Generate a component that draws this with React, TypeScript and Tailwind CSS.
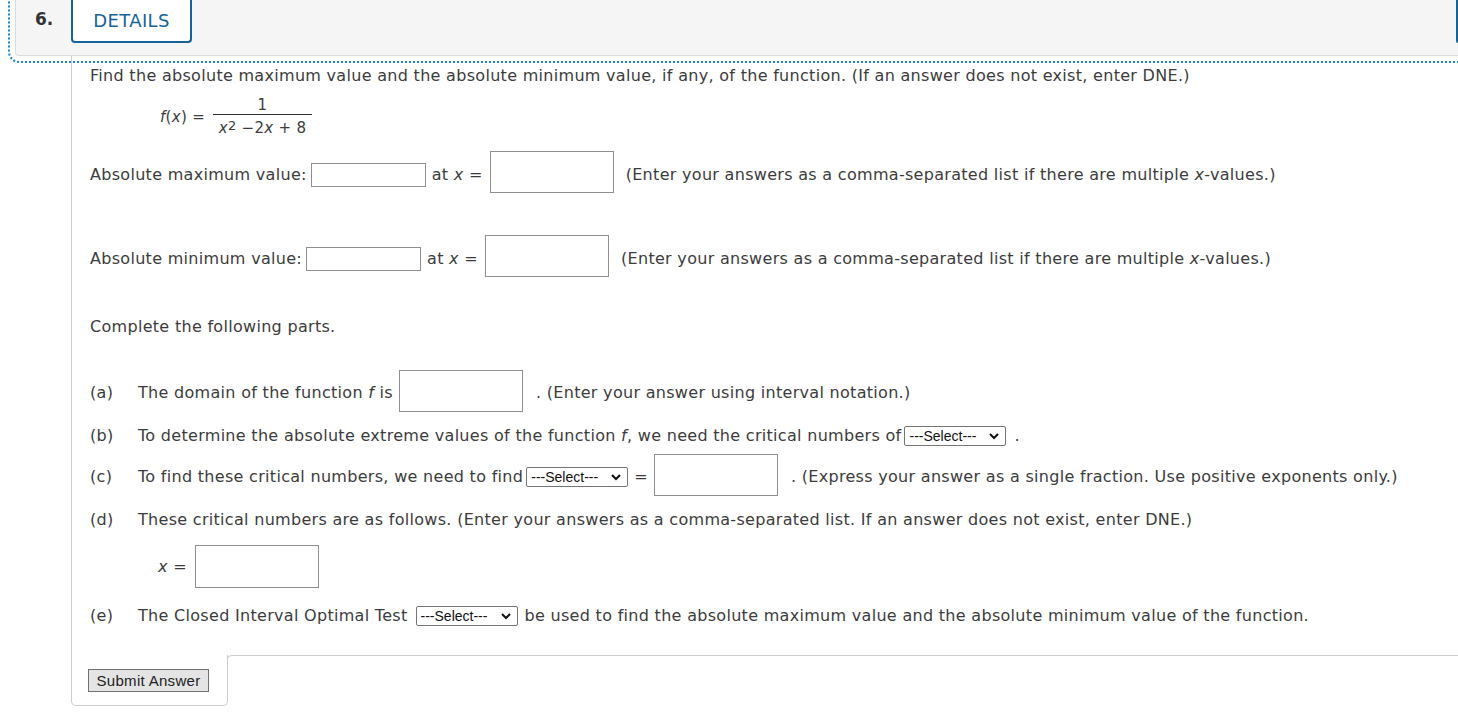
import React from 'react'

const font = { fontFamily: '"DejaVu Sans", Verdana, sans-serif' }

const SmallInput = () => <div className="h-[24px] w-[115px] border border-[#8f8f8f] bg-white" />

const TallInput = ({ className = '' }: { className?: string }) => (
  <div className={`h-[42px] w-[124px] border border-[#8f8f8f] bg-white ${className}`} />
)

const SelectBox = () => (
  <div className="flex h-[20px] w-[102px] items-center justify-between rounded-[2px] border border-[#767676] bg-white pl-[4px] pr-[6px] tracking-normal">
    <span className="text-[14px] leading-[18px] text-[#111]" style={{ fontFamily: '"Liberation Sans", Arial, sans-serif' }}>
      ---Select---
    </span>
    <svg width="10" height="8" viewBox="0 0 10 8">
      <path d="M1 2 L5 6 L9 2" fill="none" stroke="#111" strokeWidth="2" />
    </svg>
  </div>
)

const X = () => <i>x</i>

const Part = ({ label, children }: { label: string; children: React.ReactNode }) => (
  <div className="flex h-full items-center">
    <span className="w-[48px] shrink-0">{label}</span>
    {children}
  </div>
)

export default function App() {
  return (
    <div className="min-h-[712px] bg-white text-[16px] leading-[20px] tracking-[0.3px] text-[#3c3c3c]" style={font}>
      {/* header */}
      <div className="ml-[15px] flex h-[56px] items-start justify-between rounded-bl-[4px] border-b border-l border-[#dcdcdc] bg-[#f5f5f5] outline-2 outline-offset-[5px] outline-dotted outline-[#1a82e2]">
        <div className="flex items-start">
          <span className="mt-[9px] ml-[19px] w-[36px] text-[17px] font-bold tracking-normal text-[#333]">6.</span>
          <div className="flex h-[43px] w-[121px] items-center justify-center rounded-b-[4px] border-x-2 border-b-2 border-[#16639b] bg-white text-[18px] tracking-[0.4px] text-[#16639b]">
            DETAILS
          </div>
        </div>
        <div className="h-[43px] w-[2px] rounded-bl-[3px] bg-[#16639b]" />
      </div>

      {/* content */}
      <div className="ml-[71px]">
        <div className="border-l border-[#cccccc] pl-[18px] pb-[29px] pt-[10px]">
          <div className="h-[20px] whitespace-nowrap">
            Find the absolute maximum value and the absolute minimum value, if any, of the function. (If an answer does not exist, enter DNE.)
          </div>

          <div className="mt-[10px] flex h-[44px] items-start pl-[70px]">
            <span className="mt-[11px] mr-[8px] whitespace-nowrap text-[15px]">
              <i>f</i>(<X />) =
            </span>
            <div className="flex flex-col items-center">
              <div className="h-[18px] px-[4px] text-center text-[15px] leading-[18px]">1</div>
              <div className="h-px w-[99px] bg-[#333]" />
              <div className="h-[22px] pt-[4px] text-[15px] leading-[18px] whitespace-nowrap">
                <X />
                <sup className="relative -top-[3px] text-[13px]">2</sup> &minus;2<X /> + 8
              </div>
            </div>
          </div>

          <div className="mt-[11px] flex h-[48px] items-center whitespace-nowrap">
            <span className="mr-[4px]">Absolute maximum value:</span>
            <SmallInput />
            <span className="ml-[6px] mr-[7px]">
              at <X /> =
            </span>
            <TallInput className="self-start" />
            <span className="ml-[12px]">
              (Enter your answers as a comma-separated list if there are multiple <X />-values.)
            </span>
          </div>

          <div className="mt-[36px] flex h-[48px] items-center whitespace-nowrap">
            <span className="mr-[4px]">Absolute minimum value:</span>
            <SmallInput />
            <span className="ml-[6px] mr-[7px]">
              at <X /> =
            </span>
            <TallInput className="self-start" />
            <span className="ml-[12px]">
              (Enter your answers as a comma-separated list if there are multiple <X />-values.)
            </span>
          </div>

          <div className="mt-[34px] h-[20px]">Complete the following parts.</div>

          <div className="mt-[33px] h-[46px] whitespace-nowrap">
            <Part label="(a)">
              <span className="mr-[6px]">
                The domain of the function <i>f</i> is
              </span>
              <TallInput className="self-start" />
              <span className="ml-[13px]">. (Enter your answer using interval notation.)</span>
            </Part>
          </div>

          <div className="mt-[10px] h-[20px] whitespace-nowrap">
            <Part label="(b)">
              <span className="mr-[3px]">
                To determine the absolute extreme values of the function <i>f</i>, we need the critical numbers of
              </span>
              <SelectBox />
              <span className="ml-[8px]">.</span>
            </Part>
          </div>

          <div className="mt-[8px] h-[46px] whitespace-nowrap">
            <Part label="(c)">
              <span className="mr-[3px]">To find these critical numbers, we need to find</span>
              <SelectBox />
              <span className="mx-[6px]">=</span>
              <TallInput className="self-start" />
              <span className="ml-[13px]">. (Express your answer as a single fraction. Use positive exponents only.)</span>
            </Part>
          </div>

          <div className="mt-[10px] h-[20px] whitespace-nowrap">
            <Part label="(d)">
              <span>
                These critical numbers are as follows. (Enter your answers as a comma-separated list. If an answer does not exist, enter DNE.)
              </span>
            </Part>
          </div>

          <div className="mt-[15px] flex h-[43px] items-center pl-[68px]">
            <span className="mr-[8px]">
              <X /> =
            </span>
            <div className="h-[43px] w-[124px] border border-[#8f8f8f] bg-white" />
          </div>

          <div className="mt-[18px] h-[20px] whitespace-nowrap">
            <Part label="(e)">
              <span className="mr-[8px]">The Closed Interval Optimal Test</span>
              <SelectBox />
              <span className="ml-[7px]">
                be used to find the absolute maximum value and the absolute minimum value of the function.
              </span>
            </Part>
          </div>
        </div>

        {/* submit row */}
        <div className="flex">
          <div className="h-[51px] w-[157px] rounded-b-[5px] border-x border-b border-[#cccccc] pl-[16px] pt-[14px]">
            <button
              className="h-[23px] w-[121px] border border-[#707070] bg-[#e4e4e4] text-[15px] leading-[20px] text-[#222]"
              style={{ fontFamily: '"Liberation Sans", Arial, sans-serif' }}
            >
              Submit Answer
            </button>
          </div>
          <div className="-ml-px h-[12px] flex-1 rounded-tl-[5px] border-t border-l border-[#cccccc]" />
        </div>
      </div>
    </div>
  )
}
